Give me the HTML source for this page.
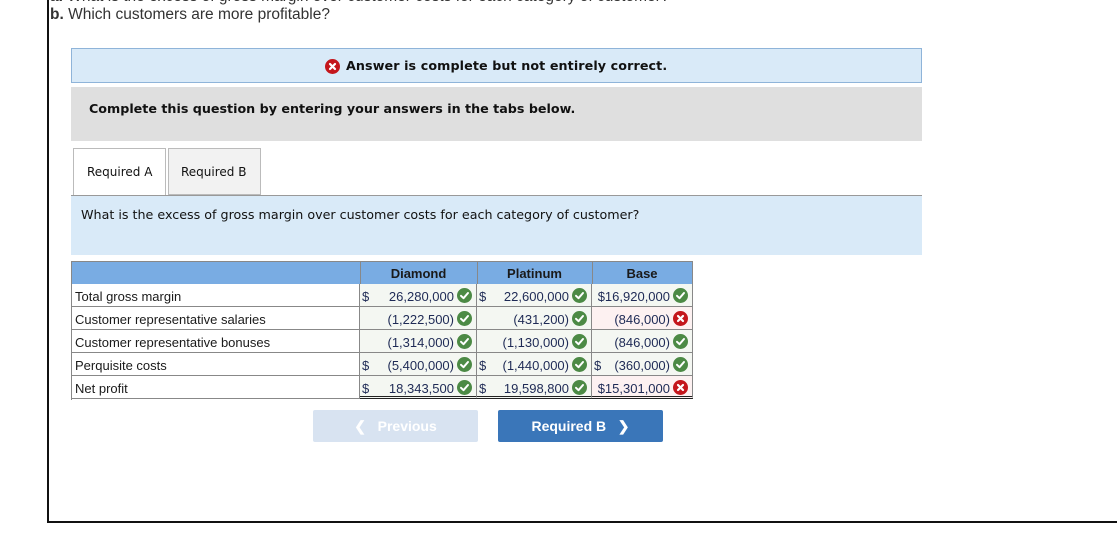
<!DOCTYPE html>
<html><head><meta charset="utf-8"><style>
*{margin:0;padding:0;box-sizing:border-box}
body{width:1117px;height:550px;background:#fff;position:relative;overflow:hidden;font-family:"DejaVu Sans","Liberation Sans",sans-serif;color:#111}
.a{position:absolute}
.tbl{font-family:"Liberation Sans",sans-serif;font-size:13px;color:#1a1a1a}
.c{position:absolute;height:23px;border-right:1px solid #888;border-bottom:1px solid #888;line-height:25px}
.n{color:#1e2a55}
.ic{position:absolute;top:4px;width:15px;height:15px;border-radius:50%}
.g{background:#4c8a45}
.r{background:#c4161c}
.ic svg{position:absolute;left:0;top:0}
</style></head><body>
<div class="a" style="left:47px;top:0;width:2px;height:523px;background:#111"></div>
<div class="a" style="left:47px;top:521px;width:1070px;height:2px;background:#111"></div>
<div class="a" style="left:50px;top:-12px;font-family:'Liberation Sans',sans-serif;font-size:15.5px;color:#333;white-space:nowrap"><b>a.</b> What is the excess of gross margin over customer costs for each category of customer?</div>
<div class="a" style="left:50px;top:6px;font-family:'Liberation Sans',sans-serif;font-size:15.5px;color:#333;white-space:nowrap"><b>b.</b> Which customers are more profitable?</div>

<div class="a" style="left:71px;top:48px;width:851px;height:35px;background:#d9eaf8;border:1px solid #8fb4d9"></div>
<div class="a" style="left:325px;top:59px;width:15px;height:15px;border-radius:50%;background:#c4161c"><svg width="15" height="15"><path d="M5 5L10 10M10 5L5 10" stroke="#fff" stroke-width="2.2" stroke-linecap="round"/></svg></div>
<div class="a" style="left:346px;top:58px;font-size:12.7px;font-weight:bold;white-space:nowrap;letter-spacing:0.1px">Answer is complete but not entirely correct.</div>

<div class="a" style="left:71px;top:87px;width:851px;height:54px;background:#dfdfdf"></div>
<div class="a" style="left:89px;top:101px;font-size:12.7px;font-weight:bold;white-space:nowrap">Complete this question by entering your answers in the tabs below.</div>

<div class="a" style="left:73px;top:148px;width:93px;height:48px;background:#fff;border:1px solid #bbb;border-bottom:none"></div>
<div class="a" style="left:168px;top:148px;width:93px;height:47px;background:#f2f2f2;border:1px solid #bbb"></div>
<div class="a" style="left:87px;top:165px;font-size:12px;white-space:nowrap">Required A</div>
<div class="a" style="left:181px;top:165px;font-size:12px;white-space:nowrap">Required B</div>
<div class="a" style="left:71px;top:195px;width:851px;height:1px;background:#999"></div>
<div class="a" style="left:71px;top:196px;width:851px;height:59px;background:#d9eaf8"></div>
<div class="a" style="left:81px;top:207px;font-size:12.7px;white-space:nowrap">What is the excess of gross margin over customer costs for each category of customer?</div>

<div class="tbl">
<div class="a" style="left:71px;top:261px;width:622px;height:24px;background:#79ace3;border:1px solid #888"></div>
<div class="a" style="left:360px;top:261px;width:1px;height:24px;background:#888"></div>
<div class="a" style="left:477px;top:261px;width:1px;height:24px;background:#888"></div>
<div class="a" style="left:592px;top:261px;width:1px;height:24px;background:#888"></div>
<div class="a" style="left:360px;top:266px;width:117px;text-align:center;font-weight:bold;font-size:13px">Diamond</div>
<div class="a" style="left:477px;top:266px;width:115px;text-align:center;font-weight:bold;font-size:13px">Platinum</div>
<div class="a" style="left:592px;top:266px;width:100px;text-align:center;font-weight:bold;font-size:13px">Base</div>
<div class="a" style="left:71px;top:284px;width:1px;height:116px;background:#888"></div>
</div>
<div id="rows" class="tbl"></div>

<div class="a" style="left:313px;top:410px;width:165px;height:32px;background:#d8e3f1;border-radius:2px;color:#fff;font-family:'Liberation Sans',sans-serif;font-weight:bold;font-size:14px;text-align:center;line-height:33px">&#10094;&nbsp;&nbsp; Previous</div>
<div class="a" style="left:498px;top:410px;width:165px;height:32px;background:#3a76b9;border-radius:2px;color:#fff;font-family:'Liberation Sans',sans-serif;font-weight:bold;font-size:14px;text-align:center;line-height:33px">Required B &nbsp;&nbsp;&#10095;</div>

<script>
var rows=[
["Total gross margin",[["$","26,280,000","g"],["$","22,600,000","g"],["$16,920,000","","g"]]],
["Customer representative salaries",[["","(1,222,500)","g"],["","(431,200)","g"],["","(846,000)","r"]]],
["Customer representative bonuses",[["","(1,314,000)","g"],["","(1,130,000)","g"],["","(846,000)","g"]]],
["Perquisite costs",[["$","(5,400,000)","g"],["$","(1,440,000)","g"],["$","(360,000)","g"]]],
["Net profit",[["$","18,343,500","g"],["$","19,598,800","g"],["$15,301,000","","r"]]]];
var cols=[[360,117],[477,115],[592,101]];
var h="";
rows.forEach(function(r,i){
 var y=284+i*23;
 h+='<div class="c" style="left:72px;top:'+y+'px;width:288px;background:#fff;padding-left:3px">'+r[0]+'</div>';
 r[1].forEach(function(c,j){
  var x=cols[j][0],w=cols[j][1];
  var bg=c[2]=="r"?"#fdf1f1":"#f4f7f2";
  var bb=(i==4)?"border-bottom:3px double #222;":"";
  h+='<div class="c n" style="left:'+x+'px;top:'+y+'px;width:'+w+'px;background:'+bg+';'+bb+'">';
  if(c[1]==""){h+='<span style="position:absolute;right:22px">'+c[0]+'</span>';}
  else{ if(c[0])h+='<span style="position:absolute;left:2px">'+c[0]+'</span>';
   h+='<span style="position:absolute;right:22px">'+c[1]+'</span>';}
  var svg=c[2]=="g"?'<svg width="15" height="15"><path d="M4 7.8L6.5 10.2L11 5" stroke="#fff" stroke-width="2" fill="none" stroke-linecap="round" stroke-linejoin="round"/></svg>':'<svg width="15" height="15"><path d="M5 5L10 10M10 5L5 10" stroke="#fff" stroke-width="2.2" stroke-linecap="round"/></svg>';
  h+='<span class="ic '+c[2]+'" style="right:4px">'+svg+'</span></div>';
 });
});
document.getElementById("rows").innerHTML=h;
</script>
</body></html>
